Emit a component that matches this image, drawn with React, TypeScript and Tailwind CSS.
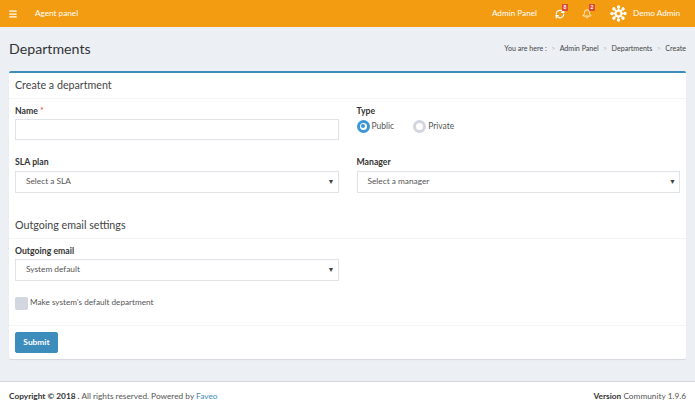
import React from "react";
import { Menu, RefreshCw, Bell } from "lucide-react";

function Logo() {
  const petals = [0, 45, 90, 135, 180, 225, 270, 315];
  return (
    <svg width="17" height="17" viewBox="0 0 34 34" className="shrink-0">
      {petals.map((a) => (
        <g key={a} transform={`rotate(${a} 17 17)`}>
          <circle cx="17" cy="4" r="3.4" fill="#fff" />
          <rect x="15.6" y="7" width="2.8" height="6" fill="#fff" />
        </g>
      ))}
      {petals.map((a) => (
        <circle key={a} cx="17" cy="11" r="2.4" fill="#fff" transform={`rotate(${a + 22} 17 17)`} />
      ))}
    </svg>
  );
}

function Select({ text }: { text: string }) {
  return (
    <div className="h-[22px] border border-[#dfe2e7] bg-white flex items-center justify-between pl-[10px] pr-[3px] text-[8.3px] text-[#555]">
      <span>{text}</span>
      <span className="text-[7px] text-[#444] leading-none">▼</span>
    </div>
  );
}

function Label({ children }: { children: React.ReactNode }) {
  return <div className="text-[8.7px] font-bold text-[#333] leading-[12px]">{children}</div>;
}

export default function App() {
  return (
    <div className="[font-family:Lato,sans-serif] w-[695px] h-[407px] bg-[#ecf0f5] flex flex-col overflow-hidden">
      <header className="h-[27px] shrink-0 bg-[#f39c12] flex items-center text-white text-[8.2px]">
        <Menu size={10} strokeWidth={3} className="ml-[8px]" />
        <span className="ml-[17px]">Agent panel</span>
        <div className="ml-auto flex items-center">
          <span>Admin Panel</span>
          <div className="relative ml-[18px]">
            <RefreshCw size={10} strokeWidth={3} />
            <span className="absolute -top-[5px] left-[7px] w-[6px] h-[7px] bg-[#dd4b39] text-[5px] leading-[7px] text-center font-bold">8</span>
          </div>
          <div className="relative ml-[17px]">
            <Bell size={10} strokeWidth={2} />
            <span className="absolute -top-[5px] left-[7px] w-[6px] h-[7px] bg-[#dd4b39] text-[5px] leading-[7px] text-center font-bold">2</span>
          </div>
          <div className="ml-[18px]"><Logo /></div>
          <span className="ml-[6px] mr-[15px]">Demo Admin</span>
        </div>
      </header>

      <div className="flex items-center justify-between h-[44px] pl-[9px] pr-[9px] shrink-0">
        <h1 className="text-[14.2px] text-[#333]">Departments</h1>
        <div className="flex items-center text-[7.1px] text-[#444] gap-[4.4px]">
          <span>You are here :</span>
          <span className="text-[#bbb]">&gt;</span>
          <span>Admin Panel</span>
          <span className="text-[#bbb]">&gt;</span>
          <span>Departments</span>
          <span className="text-[#bbb]">&gt;</span>
          <span>Create</span>
        </div>
      </div>

      <main className="mx-[9px] h-[288px] shrink-0 bg-white border-t-[2px] border-[#3c8dbc] rounded-[2px] shadow-[0_1px_1px_rgba(0,0,0,0.1)] flex flex-col">
        <div className="h-[25.5px] shrink-0 border-b border-[#f4f4f4] px-[6px] flex items-center text-[10.7px] text-[#444]">
          Create a department
        </div>
        <div className="px-[6px] pt-[6px] grid grid-cols-2 gap-x-[18px]">
          <div>
            <Label>Name <span className="text-[#dd4b39] font-normal">*</span></Label>
            <div className="h-[21px] mt-[2px] border border-[#dfe2e7] bg-white" />
          </div>
          <div>
            <Label>Type</Label>
            <div className="flex items-center text-[8.5px] text-[#555] mt-[3px]">
              <span className="w-[13px] h-[13px] rounded-full border-[3px] border-[#3c97d6] flex items-center justify-center">
                <span className="w-[4px] h-[4px] rounded-full bg-[#3c97d6]" />
              </span>
              <span className="ml-[2px]">Public</span>
              <span className="ml-[19px] w-[13px] h-[13px] rounded-full border-[3px] border-[#d2d6de]" />
              <span className="ml-[2px]">Private</span>
            </div>
          </div>
          <div className="mt-[16px]">
            <Label>SLA plan</Label>
            <div className="mt-[3px]"><Select text="Select a SLA" /></div>
          </div>
          <div className="mt-[16px]">
            <Label>Manager</Label>
            <div className="mt-[3px]"><Select text="Select a manager" /></div>
          </div>
        </div>
        <div className="mt-[24px] h-[22px] px-[6px] border-b border-[#f4f4f4] flex items-start text-[10.7px] text-[#444]">
          Outgoing email settings
        </div>
        <div className="px-[6px] pt-[6px] grid grid-cols-2 gap-x-[18px]">
          <div>
            <Label>Outgoing email</Label>
            <div className="mt-[2px]"><Select text="System default" /></div>
          </div>
        </div>
        <div className="px-[6px] mt-[16px] flex items-center text-[8.2px] text-[#555]">
          <span className="w-[13px] h-[13px] rounded-[2px] bg-[#d2d6de]" />
          <span className="ml-[2px] -mt-[1px]">Make system's default department</span>
        </div>
        <div className="mt-[15px] border-t border-[#f4f4f4] px-[6px] pt-[6px]">
          <button className="block w-[43px] h-[21px] rounded-[2px] bg-[#3c8dbc] border border-[#3c8dbc] text-white text-[8.4px] font-bold">
            Submit
          </button>
        </div>
      </main>

      <footer className="mt-auto h-[26px] shrink-0 bg-white border-t border-[#d2d6de] pl-[9px] pr-[9px] pt-[3px] flex items-center justify-between text-[8.3px] text-[#555]">
        <div>
          <b className="text-[#333]">Copyright © 2018 .</b> All rights reserved. Powered by <span className="text-[#3c8dbc]">Faveo</span>
        </div>
        <div>
          <b className="text-[#333]">Version</b> Community 1.9.6
        </div>
      </footer>
    </div>
  );
}
